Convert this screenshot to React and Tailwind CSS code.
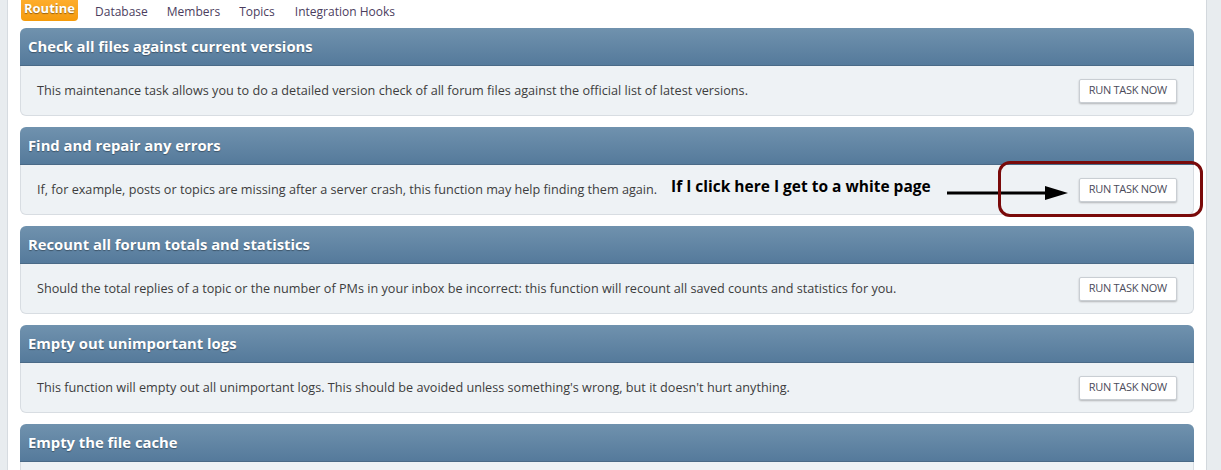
// App.jsx
import React from "react";

const tasks = [
  {
    title: "Check all files against current versions",
    desc: "This maintenance task allows you to do a detailed version check of all forum files against the official list of latest versions.",
  },
  {
    title: "Find and repair any errors",
    desc: "If, for example, posts or topics are missing after a server crash, this function may help finding them again.",
    note: true,
  },
  {
    title: "Recount all forum totals and statistics",
    desc: "Should the total replies of a topic or the number of PMs in your inbox be incorrect: this function will recount all saved counts and statistics for you.",
  },
  {
    title: "Empty out unimportant logs",
    desc: "This function will empty out all unimportant logs. This should be avoided unless something's wrong, but it doesn't hurt anything.",
  },
  {
    title: "Empty the file cache",
    desc: "",
  },
];

function TaskPanel({ task }) {
  return (
    <div className="relative mb-[11px]">
      <div className="h-[38px] rounded-t-[6px] bg-gradient-to-b from-[#7092ae] to-[#557a9b] border-b border-[#4a6a87] flex items-center px-[8px]">
        <h3 className="text-white font-bold text-[14.8px] [text-shadow:0_1px_1px_rgba(0,0,0,0.35)]">
          {task.title}
        </h3>
      </div>
      <div className="h-[50px] bg-[#eef2f5] border border-t-0 border-[#d8dde2] rounded-b-[6px] flex items-center pl-[16px] pr-[16px]">
        <p className="text-[12.65px] text-[#3d3d3d] flex-1">{task.desc}</p>
        {task.desc && (
          <button className="h-[24px] px-[9px] bg-white border border-[#c9ced3] rounded-[2px] shadow-[0_1px_2px_rgba(0,0,0,0.25)] text-[11px] text-[#4b4b5a] tracking-tight">
            RUN TASK NOW
          </button>
        )}
      </div>
      {task.note && (
        <>
          <span className="absolute left-[651px] top-[48px] text-[15.5px] font-bold text-black">
            If I click here I get to a white page
          </span>
          <svg
            className="absolute left-[927px] top-[56px]"
            width="122"
            height="20"
            viewBox="0 0 122 20"
          >
            <line x1="0" y1="10" x2="102" y2="10" stroke="#000" strokeWidth="3" />
            <polygon points="98,3 121,10 98,17" fill="#000" />
          </svg>
          <div className="absolute left-[978px] top-[34px] w-[205px] h-[56px] border-[3px] border-[#7a0a0a] rounded-[12px]" />
        </>
      )}
    </div>
  );
}

export default function App() {
  return (
    <div
      className="flex h-[470px] overflow-hidden bg-[#e8ecef]"
      style={{ fontFamily: '"Open Sans", "Noto Sans", sans-serif' }}
    >
      <div className="w-[8px] shrink-0 border-r border-[#d6dbe0]" />
      <div className="w-[1199px] shrink-0 bg-white border-r border-[#d3d8dd] px-[12px]">
        <div className="flex items-start h-[28px] text-[12px]">
          <span className="-mt-[4px] ml-[1px] h-[25px] w-[57px] flex items-end justify-center pb-[3px] rounded-[4px] bg-gradient-to-b from-[#ffb030] to-[#f59b0a] text-white text-[13px] font-bold [text-shadow:0_1px_1px_rgba(0,0,0,0.4)]">
            Routine
          </span>
          <span className="ml-[17px] mt-[3px] text-[#4b3d5e]">Database</span>
          <span className="ml-[19px] mt-[3px] text-[#4b3d5e]">Members</span>
          <span className="ml-[19px] mt-[3px] text-[#4b3d5e]">Topics</span>
          <span className="ml-[20px] mt-[3px] text-[#4b3d5e]">Integration Hooks</span>
        </div>
        {tasks.map((t) => (
          <TaskPanel key={t.title} task={t} />
        ))}
      </div>
    </div>
  );
}
